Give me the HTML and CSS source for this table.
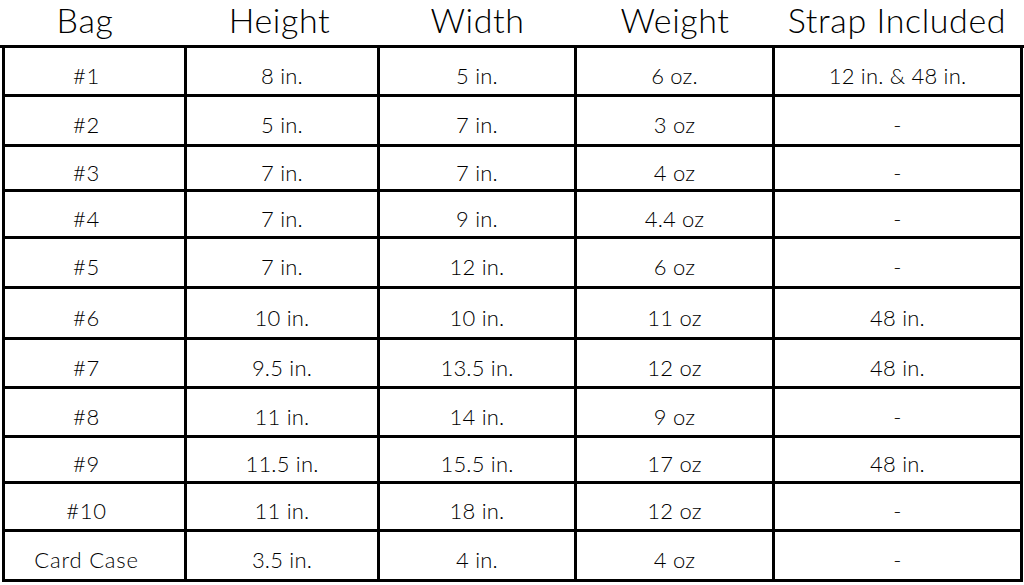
FILE: index.html
```html
<!DOCTYPE html>
<html>
<head>
<meta charset="utf-8">
<link rel="stylesheet" href="styles.css">
</head>
<body>
<div class="head">
  <div class="h c1">Bag</div>
  <div class="h c2">Height</div>
  <div class="h c3">Width</div>
  <div class="h c4">Weight</div>
  <div class="h c5">Strap Included</div>
</div>
<div class="grid">
  <div class="cell">#1</div><div class="cell">8 in.</div><div class="cell">5 in.</div><div class="cell">6 oz.</div><div class="cell">12 in. &amp; 48 in.</div>
  <div class="cell">#2</div><div class="cell">5 in.</div><div class="cell">7 in.</div><div class="cell">3 oz</div><div class="cell">-</div>
  <div class="cell">#3</div><div class="cell">7 in.</div><div class="cell">7 in.</div><div class="cell">4 oz</div><div class="cell">-</div>
  <div class="cell">#4</div><div class="cell">7 in.</div><div class="cell">9 in.</div><div class="cell">4.4 oz</div><div class="cell">-</div>
  <div class="cell">#5</div><div class="cell">7 in.</div><div class="cell">12 in.</div><div class="cell">6 oz</div><div class="cell">-</div>
  <div class="cell">#6</div><div class="cell">10 in.</div><div class="cell">10 in.</div><div class="cell">11 oz</div><div class="cell">48 in.</div>
  <div class="cell">#7</div><div class="cell">9.5 in.</div><div class="cell">13.5 in.</div><div class="cell">12 oz</div><div class="cell">48 in.</div>
  <div class="cell">#8</div><div class="cell">11 in.</div><div class="cell">14 in.</div><div class="cell">9 oz</div><div class="cell">-</div>
  <div class="cell">#9</div><div class="cell">11.5 in.</div><div class="cell">15.5 in.</div><div class="cell">17 oz</div><div class="cell">48 in.</div>
  <div class="cell">#10</div><div class="cell">11 in.</div><div class="cell">18 in.</div><div class="cell">12 oz</div><div class="cell">-</div>
  <div class="cell">Card Case</div><div class="cell">3.5 in.</div><div class="cell">4 in.</div><div class="cell">4 oz</div><div class="cell">-</div>
</div>
</body>
</html>
```

FILE: styles.css
```css
html, body {
  margin: 0;
  padding: 0;
  background: #fff;
}
body {
  width: 1024px;
  height: 585px;
  overflow: hidden;
  font-family: Lato, "Open Sans", sans-serif;
  font-weight: 300;
  color: #000;
}
.head {
  display: grid;
  grid-template-columns: 184px 193px 197px 198px 252px;
  height: 45px;
  border-bottom: 3px solid #000;
  padding-left: 2px;
}
.h {
  font-size: 34px;
  line-height: 40px;
  text-align: center;
  letter-spacing: 0.6px;
}
.c1 {
  padding-right: 18px;
}
.c2 {
  padding-right: 6px;
}
.c5 {
  padding-right: 6px;
}
.grid {
  margin-left: 2px;
  width: 1015px;
  background: #000;
  padding: 0 3px 3px 3px;
  display: grid;
  grid-template-columns: 179px 190px 194px 195px 245px;
  grid-template-rows: 46px 47px 42px 44px 47px 48px 46px 46px 43px 45px 47px;
  gap: 3px;
}
.cell {
  background: #fff;
  display: flex;
  align-items: center;
  justify-content: center;
  padding-top: 8px;
  box-sizing: border-box;
  font-size: 22px;
  letter-spacing: 0.2px;
}
.cell:nth-child(5n+1) {
  padding-right: 16px;
  letter-spacing: 0.8px;
}
```
